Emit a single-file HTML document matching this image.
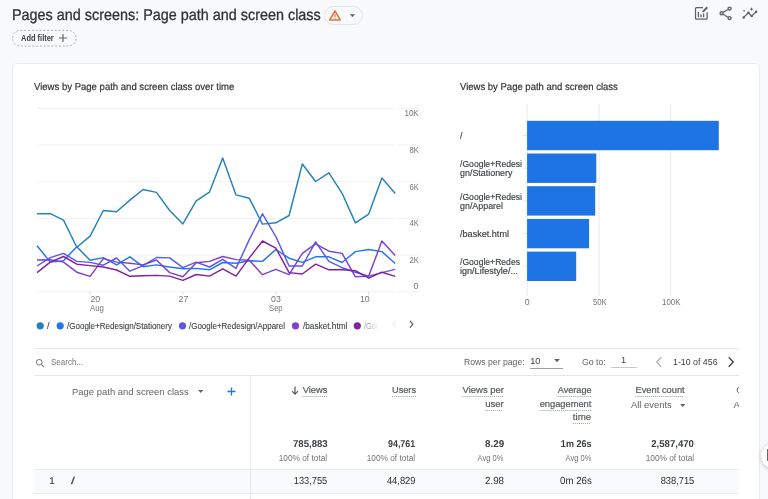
<!DOCTYPE html>
<html lang="en"><head><meta charset="utf-8"><title>Pages and screens: Page path and screen class</title>
<style>
html,body{margin:0;padding:0}
body{width:768px;height:499px;overflow:hidden;background:#f8f9fa;position:relative;font-family:"Liberation Sans",Arial,sans-serif;-webkit-font-smoothing:antialiased}
#root{position:absolute;left:0;top:0;width:768px;height:499px;overflow:hidden;will-change:transform}
.t{position:absolute;white-space:nowrap;display:block}
.u{text-decoration:underline dotted #9aa0a6;text-decoration-thickness:1px;text-underline-offset:2.8px}
</style></head><body><div id="root">
<span class="t" style="left:12.40px;top:6.78px;font-size:15.7px;line-height:18.84px;color:#303236;-webkit-text-stroke:0.3px #303236;text-rendering:geometricPrecision;transform:scaleX(0.9172);transform-origin:left center;">Pages and screens: Page path and screen class</span>
<div style="position:absolute;left:324.2px;top:6.2px;width:39.2px;height:18.4px;border:1px solid #e1e3e6;border-radius:10px;box-sizing:border-box;"></div>
<svg style="position:absolute;left:0;top:0" width="768" height="40" viewBox="0 0 768 40">
<path d="M335 10.9 L340.3 20 H329.7 Z" fill="none" stroke="#dd7440" stroke-width="1.5" stroke-linejoin="round"/>
<path d="M335 14v3.2" stroke="#dd7440" stroke-width="1.2" fill="none"/><circle cx="335" cy="18.6" r="0.65" fill="#dd7440"/>
<path d="M349.8 14.2h5.4l-2.7 2.9z" fill="#5f6368"/>
<g fill="none" stroke="#5f6368" stroke-width="1.25" stroke-linejoin="round">
<path d="M703 7.6H696.400Q695.500 7.600 695.500 8.500V18.300Q695.500 19.200 696.400 19.200H706.200Q707.100 19.200 707.100 18.300V12.200"/>
<path d="M698.400 17.200v-5.200M701 17.200v-2.600M703.600 17.200v-3.800" stroke-width="1.3"/>
<path d="M702.800 11.900L707.300 7.300" stroke-width="2"/>
<circle cx="729.600" cy="8.600" r="1.500" stroke-width="1.4"/><circle cx="721.600" cy="13.300" r="1.500" stroke-width="1.4"/><circle cx="729.600" cy="18.100" r="1.500" stroke-width="1.4"/>
<path d="M723.100 12.400l5-2.900M723.100 14.200l5 3"/>
<path d="M743.600 17.400l4.800-4.700 3.300 3.400 4.500-4.400" stroke-width="1.3"/>
</g>
<g fill="#5f6368"><circle cx="743.600" cy="17.400" r="1.250"/><circle cx="748.400" cy="12.700" r="1.250"/><circle cx="751.700" cy="16.100" r="1.250"/><circle cx="756.200" cy="11.700" r="1.250"/>
<path d="M751.500 7.300l0.600 1.300 1.300 0.600-1.300 0.600-0.600 1.300-0.600-1.300-1.300-0.600 1.300-0.600z"/><circle cx="744.100" cy="10.700" r="0.900" fill="#6d7175"/></g>
</svg>
<svg style="position:absolute;left:0;top:0" width="100" height="60" viewBox="0 0 100 60"><rect x="12.6" y="30.4" width="63.600" height="15.600" rx="7.800" fill="none" stroke="#b0b4b9" stroke-width="1" stroke-dasharray="2.100 1.700"/><path d="M63 34.100v7.800M59.100 38h7.800" stroke="#5f6368" stroke-width="1.150" fill="none"/></svg>
<span class="t" style="left:20.80px;top:32.94px;font-size:8.6px;line-height:10.32px;color:#3c4043;font-weight:700;transform:scaleX(0.8690);transform-origin:left center;">Add filter</span>
<div style="position:absolute;left:12px;top:63.4px;width:748px;height:460px;border:1px solid #eaecef;border-radius:4.5px;box-sizing:border-box;background:#fff"></div>
<span class="t" style="left:34.00px;top:82.18px;font-size:10.2px;line-height:12.24px;color:#303236;-webkit-text-stroke:0.2px #303236;text-rendering:geometricPrecision;transform:scaleX(0.9364);transform-origin:left center;">Views by Page path and screen class over time</span>
<span class="t" style="left:460.00px;top:82.18px;font-size:10.2px;line-height:12.24px;color:#303236;-webkit-text-stroke:0.2px #303236;text-rendering:geometricPrecision;transform:scaleX(0.9330);transform-origin:left center;">Views by Page path and screen class</span>
<svg style="position:absolute;left:0;top:0" width="768" height="499" viewBox="0 0 768 499">
<path d="M37 108.3H395.5M398 108.3H418.5" stroke="#f1f1f1" stroke-width="1"/>
<path d="M37 145.0H395.5M398 145.0H418.5" stroke="#f1f1f1" stroke-width="1"/>
<path d="M37 181.7H395.5M398 181.7H418.5" stroke="#f1f1f1" stroke-width="1"/>
<path d="M37 218.4H395.5M398 218.4H418.5" stroke="#f1f1f1" stroke-width="1"/>
<path d="M37 255.1H395.5M398 255.1H418.5" stroke="#f1f1f1" stroke-width="1"/>
<path d="M37 291.8H395.5M398 291.8H418.5" stroke="#f1f1f1" stroke-width="1"/>
<path d="M90.1 291.8v3.5" stroke="#e0e0e0" stroke-width="1"/>
<path d="M182.9 291.8v3.5" stroke="#e0e0e0" stroke-width="1"/>
<path d="M275.8 291.8v3.5" stroke="#e0e0e0" stroke-width="1"/>
<path d="M368.7 291.8v3.5" stroke="#e0e0e0" stroke-width="1"/>
<polyline points="37.0,245.7 50.3,262.1 63.5,260.7 76.8,246.7 90.1,260.3 103.3,257.6 116.6,264.9 129.9,256.8 143.1,266.7 156.4,264.9 169.7,267.0 182.9,268.7 196.2,268.4 209.5,269.8 222.7,262.5 236.0,263.2 249.3,260.7 262.5,261.4 275.8,249.5 289.1,258.2 302.3,262.4 315.6,256.8 328.9,256.8 342.1,262.5 355.4,251.6 368.7,249.5 381.9,251.6 395.2,263.5" fill="none" stroke="#2277e8" stroke-width="1.45" stroke-linejoin="round"/>
<polyline points="37.0,266.0 50.3,257.6 63.5,253.4 76.8,261.4 90.1,262.4 103.3,265.2 116.6,258.0 129.9,271.2 143.1,265.6 156.4,257.5 169.7,257.9 182.9,267.7 196.2,262.1 209.5,267.0 222.7,259.3 236.0,268.4 249.3,239.6 262.5,213.8 275.8,236.5 289.1,266.0 302.3,266.0 315.6,241.8 328.9,261.4 342.1,267.7 355.4,272.3 368.7,276.1 381.9,272.6 395.2,269.4" fill="none" stroke="#5857ee" stroke-width="1.45" stroke-linejoin="round"/>
<polyline points="37.0,260.0 50.3,259.7 63.5,262.1 76.8,272.2 90.1,276.4 103.3,258.6 116.6,262.1 129.9,263.2 143.1,264.9 156.4,260.0 169.7,272.6 182.9,276.8 196.2,262.8 209.5,261.4 222.7,256.5 236.0,259.6 249.3,260.3 262.5,274.7 275.8,269.4 289.1,274.7 302.3,253.4 315.6,243.9 328.9,251.2 342.1,253.4 355.4,276.8 368.7,276.1 381.9,241.1 395.2,255.4" fill="none" stroke="#7e40d3" stroke-width="1.45" stroke-linejoin="round"/>
<polyline points="37.0,272.6 50.3,262.1 63.5,256.5 76.8,264.2 90.1,265.6 103.3,267.0 116.6,270.0 129.9,276.3 143.1,275.7 156.4,275.4 169.7,276.1 182.9,280.4 196.2,274.5 209.5,276.1 222.7,268.8 236.0,276.1 249.3,257.9 262.5,241.0 275.8,248.1 289.1,272.6 302.3,274.0 315.6,264.2 328.9,269.8 342.1,269.8 355.4,270.6 368.7,278.2 381.9,272.2 395.2,276.4" fill="none" stroke="#82229f" stroke-width="1.45" stroke-linejoin="round"/>
<polyline points="37.0,213.7 50.3,213.7 63.5,220.1 76.8,247.2 90.1,236.1 103.3,210.5 116.6,211.7 129.9,200.1 143.1,189.5 156.4,192.4 169.7,210.5 182.9,223.9 196.2,200.9 209.5,192.1 222.7,158.0 236.0,194.9 249.3,198.3 262.5,224.1 275.8,222.8 289.1,215.5 302.3,164.0 315.6,181.5 328.9,172.8 342.1,193.3 355.4,222.9 368.7,214.1 381.9,178.0 395.2,193.5" fill="none" stroke="#2283bc" stroke-width="1.45" stroke-linejoin="round"/>
<circle cx="40.2" cy="325.8" r="3.6" fill="#2283bc"/>
<circle cx="60.2" cy="325.8" r="3.6" fill="#2277e8"/>
<circle cx="182.5" cy="325.8" r="3.6" fill="#5857ee"/>
<circle cx="295.5" cy="325.8" r="3.6" fill="#7e40d3"/>
<circle cx="357.3" cy="325.8" r="3.6" fill="#82229f"/>
<path d="M395.4 321.2l-2.500 3.100 2.500 3.100" fill="none" stroke="#e2e2e2" stroke-width="1"/>
<path d="M410 320.900l2.800 3.400-2.800 3.400" fill="none" stroke="#5f6368" stroke-width="1.250"/>
<path d="M527.1 104V296" stroke="#e9e9e9" stroke-width="1"/>
<path d="M599.0 104V296" stroke="#e9e9e9" stroke-width="1"/>
<path d="M670.6 104V296" stroke="#e9e9e9" stroke-width="1"/>
<rect x="527.1" y="120.8" width="191.7" height="29.4" fill="#1f74e4"/>
<path d="M523.5 135.5H527" stroke="#e0e0e0" stroke-width="1"/>
<rect x="527.1" y="153.5" width="69.2" height="29.4" fill="#1f74e4"/>
<path d="M523.5 168.2H527" stroke="#e0e0e0" stroke-width="1"/>
<rect x="527.1" y="186.2" width="68.1" height="29.4" fill="#1f74e4"/>
<path d="M523.5 200.9H527" stroke="#e0e0e0" stroke-width="1"/>
<rect x="527.1" y="218.9" width="62.0" height="29.4" fill="#1f74e4"/>
<path d="M523.5 233.6H527" stroke="#e0e0e0" stroke-width="1"/>
<rect x="527.1" y="251.6" width="49.1" height="29.4" fill="#1f74e4"/>
<path d="M523.5 266.3H527" stroke="#e0e0e0" stroke-width="1"/>
</svg>
<span class="t" style="left:402.84px;top:108.12px;font-size:8.8px;line-height:10.56px;color:#757575;transform:scaleX(0.9069);transform-origin:right center;">10K</span>
<span class="t" style="left:407.74px;top:144.82px;font-size:8.8px;line-height:10.56px;color:#757575;transform:scaleX(0.8640);transform-origin:right center;">8K</span>
<span class="t" style="left:407.74px;top:181.52px;font-size:8.8px;line-height:10.56px;color:#757575;transform:scaleX(0.8640);transform-origin:right center;">6K</span>
<span class="t" style="left:407.74px;top:218.22px;font-size:8.8px;line-height:10.56px;color:#757575;transform:scaleX(0.8640);transform-origin:right center;">4K</span>
<span class="t" style="left:407.74px;top:254.92px;font-size:8.8px;line-height:10.56px;color:#757575;transform:scaleX(0.8640);transform-origin:right center;">2K</span>
<span class="t" style="left:413.61px;top:281.32px;font-size:8.8px;line-height:10.56px;color:#757575;">0</span>
<span class="t" style="left:90.40px;top:294.42px;font-size:8.8px;line-height:10.56px;color:#757575;">20</span>
<span class="t" style="left:90.40px;top:302.52px;font-size:8.8px;line-height:10.56px;color:#757575;transform:scaleX(0.8941);transform-origin:left center;">Aug</span>
<span class="t" style="left:178.51px;top:294.42px;font-size:8.8px;line-height:10.56px;color:#757575;">27</span>
<span class="t" style="left:271.11px;top:294.42px;font-size:8.8px;line-height:10.56px;color:#757575;">03</span>
<span class="t" style="left:268.47px;top:302.52px;font-size:8.8px;line-height:10.56px;color:#757575;transform:scaleX(0.8686);transform-origin:center center;">Sep</span>
<span class="t" style="left:359.91px;top:294.42px;font-size:8.8px;line-height:10.56px;color:#757575;">10</span>
<span class="t" style="left:47.00px;top:320.72px;font-size:8.8px;line-height:10.56px;color:#3c4043;-webkit-text-stroke:0.1px #3c4043;">/</span>
<span class="t" style="left:67.00px;top:320.72px;font-size:8.8px;line-height:10.56px;color:#3c4043;-webkit-text-stroke:0.1px #3c4043;transform:scaleX(0.9114);transform-origin:left center;">/Google+Redesign/Stationery</span>
<span class="t" style="left:189.20px;top:320.72px;font-size:8.8px;line-height:10.56px;color:#3c4043;-webkit-text-stroke:0.1px #3c4043;transform:scaleX(0.9064);transform-origin:left center;">/Google+Redesign/Apparel</span>
<span class="t" style="left:302.50px;top:320.72px;font-size:8.8px;line-height:10.56px;color:#3c4043;-webkit-text-stroke:0.1px #3c4043;transform:scaleX(0.9359);transform-origin:left center;">/basket.html</span>
<span class="t" style="left:364.40px;top:320.72px;font-size:8.8px;line-height:10.56px;color:#a2a2a2;transform:scaleX(0.8387);transform-origin:left center;-webkit-mask-image:linear-gradient(90deg,#000 30%,transparent 100%);mask-image:linear-gradient(90deg,#000 30%,transparent 100%);">/Goo</span>
<span class="t" style="left:460.00px;top:130.92px;font-size:8.8px;line-height:10.56px;color:#3c4043;-webkit-text-stroke:0.15px #3c4043;">/</span>
<span class="t" style="left:460.00px;top:159.32px;font-size:8.8px;line-height:10.56px;color:#3c4043;-webkit-text-stroke:0.15px #3c4043;transform:scaleX(0.9786);transform-origin:left center;">/Google+Redesi</span>
<span class="t" style="left:460.00px;top:168.32px;font-size:8.8px;line-height:10.56px;color:#3c4043;-webkit-text-stroke:0.15px #3c4043;transform:scaleX(1.0124);transform-origin:left center;">gn/Stationery</span>
<span class="t" style="left:460.00px;top:191.72px;font-size:8.8px;line-height:10.56px;color:#3c4043;-webkit-text-stroke:0.15px #3c4043;transform:scaleX(0.9786);transform-origin:left center;">/Google+Redesi</span>
<span class="t" style="left:460.00px;top:200.72px;font-size:8.8px;line-height:10.56px;color:#3c4043;-webkit-text-stroke:0.15px #3c4043;transform:scaleX(1.0102);transform-origin:left center;">gn/Apparel</span>
<span class="t" style="left:460.00px;top:228.92px;font-size:8.8px;line-height:10.56px;color:#3c4043;-webkit-text-stroke:0.15px #3c4043;transform:scaleX(1.0328);transform-origin:left center;">/basket.html</span>
<span class="t" style="left:460.00px;top:256.92px;font-size:8.8px;line-height:10.56px;color:#3c4043;-webkit-text-stroke:0.15px #3c4043;transform:scaleX(0.9772);transform-origin:left center;">/Google+Redes</span>
<span class="t" style="left:460.00px;top:266.22px;font-size:8.8px;line-height:10.56px;color:#3c4043;-webkit-text-stroke:0.15px #3c4043;transform:scaleX(1.0311);transform-origin:left center;">ign/Lifestyle/...</span>
<span class="t" style="left:524.65px;top:297.02px;font-size:8.8px;line-height:10.56px;color:#757575;">0</span>
<span class="t" style="left:591.57px;top:297.02px;font-size:8.8px;line-height:10.56px;color:#757575;transform:scaleX(0.8813);transform-origin:center center;">50K</span>
<span class="t" style="left:660.72px;top:297.02px;font-size:8.8px;line-height:10.56px;color:#757575;transform:scaleX(0.8953);transform-origin:center center;">100K</span>
<div style="position:absolute;left:34px;top:347.5px;width:705px;height:1px;background:#e6e6e6"></div>
<div style="position:absolute;left:34px;top:374.6px;width:705px;height:1px;background:#e6e6e6"></div>
<div style="position:absolute;left:250px;top:375px;width:1px;height:130px;background:#ededed"></div>
<div style="position:absolute;left:34px;top:469px;width:705px;height:24.5px;background:#f9fafb;border-top:1px solid #ebebeb;border-bottom:1px solid #ebebeb;box-sizing:border-box"></div>
<div style="position:absolute;left:250px;top:469px;width:1px;height:30px;background:#e6e6e6"></div>
<svg style="position:absolute;left:34.5px;top:357.5px" width="10" height="10" viewBox="0 0 10 10" fill="none" stroke="#80868b" stroke-width="1.05"><circle cx="4.200" cy="4.200" r="2.800"/><path d="M6.300 6.300L9.200 9.200"/></svg>
<span class="t" style="left:51.00px;top:356.92px;font-size:8.8px;line-height:10.56px;color:#757575;transform:scaleX(0.9086);transform-origin:left center;">Search...</span>
<span class="t" style="left:463.70px;top:356.58px;font-size:9.2px;line-height:11.04px;color:#5f6368;transform:scaleX(0.9420);transform-origin:left center;">Rows per page:</span>
<span class="t" style="left:530.20px;top:355.98px;font-size:9.2px;line-height:11.04px;color:#3c4043;">10</span>
<svg style="position:absolute;left:554px;top:359.200px" width="6" height="3.300" viewBox="0 0 7 4"><path d="M0 0h7L3.5 4z" fill="#5f6368"/></svg>
<div style="position:absolute;left:530px;top:367.5px;width:33px;height:1px;background:#9aa0a6"></div>
<span class="t" style="left:581.80px;top:356.88px;font-size:9.2px;line-height:11.04px;color:#5f6368;transform:scaleX(0.9498);transform-origin:left center;">Go to:</span>
<span class="t" style="left:621.04px;top:354.98px;font-size:9.2px;line-height:11.04px;color:#3c4043;">1</span>
<div style="position:absolute;left:611px;top:367px;width:26px;height:1px;background:#c6c9cd"></div>
<svg style="position:absolute;left:654px;top:356px" width="10" height="12" viewBox="0 0 10 12"><path d="M7.3 1.2L2.7 6l4.600 4.800" fill="none" stroke="#a6a6a6" stroke-width="1.1"/></svg>
<span class="t" style="left:672.50px;top:356.78px;font-size:9.2px;line-height:11.04px;color:#3c4043;transform:scaleX(0.9581);transform-origin:left center;">1-10 of 456</span>
<svg style="position:absolute;left:726px;top:356px" width="10" height="12" viewBox="0 0 10 12"><path d="M2.700 1.200L7.300 6l-4.600 4.800" fill="none" stroke="#3c4043" stroke-width="1.3"/></svg>
<span class="t" style="left:71.70px;top:385.52px;font-size:9.8px;line-height:11.76px;color:#5f6368;transform:scaleX(0.9657);transform-origin:left center;">Page path and screen class</span>
<svg style="position:absolute;left:197.6px;top:390px" width="5.4" height="2.9" viewBox="0 0 7 4"><path d="M0 0h7L3.5 4z" fill="#5f6368"/></svg>
<svg style="position:absolute;left:226.5px;top:387px" width="9" height="9" viewBox="0 0 9 9"><path d="M4.500 0.500v8M0.500 4.500h8" stroke="#1a73e8" stroke-width="1.3" fill="none"/></svg>
<svg style="position:absolute;left:290.5px;top:385.5px" width="8" height="9" viewBox="0 0 8 9"><path d="M4 0.500v7.500M1.100 5.200l2.900 2.900L6.900 5.200" fill="none" stroke="#53575b" stroke-width="1.2"/></svg>
<span class="t u" style="left:302.17px;top:384.04px;font-size:9.6px;line-height:11.52px;color:#53575b;-webkit-text-stroke:0.2px #53575b;transform:scaleX(0.9750);transform-origin:right center;">Views</span>
<span class="t u" style="left:390.53px;top:384.04px;font-size:9.6px;line-height:11.52px;color:#53575b;-webkit-text-stroke:0.2px #53575b;transform:scaleX(0.9614);transform-origin:right center;">Users</span>
<span class="t u" style="left:461.82px;top:384.04px;font-size:9.6px;line-height:11.52px;color:#53575b;-webkit-text-stroke:0.2px #53575b;transform:scaleX(0.9863);transform-origin:right center;">Views per</span>
<span class="t u" style="left:485.12px;top:397.84px;font-size:9.6px;line-height:11.52px;color:#53575b;-webkit-text-stroke:0.2px #53575b;transform:scaleX(0.9906);transform-origin:right center;">user</span>
<span class="t u" style="left:555.92px;top:384.04px;font-size:9.6px;line-height:11.52px;color:#53575b;-webkit-text-stroke:0.2px #53575b;transform:scaleX(0.9499);transform-origin:right center;">Average</span>
<span class="t u" style="left:538.12px;top:397.64px;font-size:9.6px;line-height:11.52px;color:#53575b;-webkit-text-stroke:0.2px #53575b;transform:scaleX(0.9686);transform-origin:right center;">engagement</span>
<span class="t u" style="left:573.36px;top:411.24px;font-size:9.6px;line-height:11.52px;color:#53575b;-webkit-text-stroke:0.2px #53575b;transform:scaleX(1.0090);transform-origin:right center;">time</span>
<span class="t u" style="left:633.60px;top:384.04px;font-size:9.6px;line-height:11.52px;color:#53575b;-webkit-text-stroke:0.2px #53575b;transform:scaleX(0.9704);transform-origin:right center;">Event count</span>
<span class="t" style="left:630.60px;top:399.14px;font-size:9.6px;line-height:11.52px;color:#5f6368;transform:scaleX(0.9803);transform-origin:left center;">All events</span>
<svg style="position:absolute;left:680.2px;top:403.6px" width="5.5" height="3" viewBox="0 0 7 4"><path d="M0 0h7L3.500 4z" fill="#5f6368"/></svg>
<div style="position:absolute;left:733.4px;top:380px;width:5.6px;height:40px;overflow:hidden"><span class="t" style="left:2.800px;top:4px;font-size:9.6px;line-height:11.5px;color:#5f6368">Conversions</span><span class="t" style="left:0;top:19.2px;font-size:9.6px;line-height:11.5px;color:#5f6368">All events</span></div>
<span class="t" style="left:291.81px;top:438.66px;font-size:9.9px;line-height:11.88px;color:#3c4043;font-weight:700;text-rendering:geometricPrecision;transform:scaleX(0.9724);transform-origin:right center;">785,883</span>
<span class="t" style="left:385.32px;top:438.66px;font-size:9.9px;line-height:11.88px;color:#3c4043;font-weight:700;text-rendering:geometricPrecision;transform:scaleX(0.9016);transform-origin:right center;">94,761</span>
<span class="t" style="left:484.53px;top:438.66px;font-size:9.9px;line-height:11.88px;color:#3c4043;font-weight:700;text-rendering:geometricPrecision;transform:scaleX(0.9965);transform-origin:right center;">8.29</span>
<span class="t" style="left:557.92px;top:438.66px;font-size:9.9px;line-height:11.88px;color:#3c4043;font-weight:700;text-rendering:geometricPrecision;transform:scaleX(0.9143);transform-origin:right center;">1m 26s</span>
<span class="t" style="left:649.76px;top:438.66px;font-size:9.9px;line-height:11.88px;color:#3c4043;font-weight:700;text-rendering:geometricPrecision;transform:scaleX(0.9718);transform-origin:right center;">2,587,470</span>
<span class="t" style="left:277.40px;top:452.74px;font-size:8.6px;line-height:10.32px;color:#757575;transform:scaleX(0.9661);transform-origin:right center;">100% of total</span>
<span class="t" style="left:365.40px;top:452.74px;font-size:8.6px;line-height:10.32px;color:#757575;transform:scaleX(0.9661);transform-origin:right center;">100% of total</span>
<span class="t" style="left:474.32px;top:452.74px;font-size:8.6px;line-height:10.32px;color:#757575;transform:scaleX(0.8819);transform-origin:right center;">Avg 0%</span>
<span class="t" style="left:562.02px;top:452.74px;font-size:8.6px;line-height:10.32px;color:#757575;transform:scaleX(0.8819);transform-origin:right center;">Avg 0%</span>
<span class="t" style="left:643.60px;top:452.74px;font-size:8.6px;line-height:10.32px;color:#757575;transform:scaleX(0.9661);transform-origin:right center;">100% of total</span>
<span class="t" style="left:290.37px;top:476.12px;font-size:10.3px;line-height:12.36px;color:#2c2e31;text-rendering:geometricPrecision;transform:scaleX(0.8998);transform-origin:right center;">133,755</span>
<span class="t" style="left:384.10px;top:476.12px;font-size:10.3px;line-height:12.36px;color:#2c2e31;text-rendering:geometricPrecision;transform:scaleX(0.9078);transform-origin:right center;">44,829</span>
<span class="t" style="left:483.75px;top:476.12px;font-size:10.3px;line-height:12.36px;color:#2c2e31;text-rendering:geometricPrecision;transform:scaleX(0.9478);transform-origin:right center;">2.98</span>
<span class="t" style="left:557.72px;top:476.12px;font-size:10.3px;line-height:12.36px;color:#2c2e31;text-rendering:geometricPrecision;transform:scaleX(0.9385);transform-origin:right center;">0m 26s</span>
<span class="t" style="left:656.57px;top:476.12px;font-size:10.3px;line-height:12.36px;color:#2c2e31;text-rendering:geometricPrecision;transform:scaleX(0.9024);transform-origin:right center;">838,715</span>
<span class="t" style="left:49.15px;top:476.06px;font-size:9.9px;line-height:11.88px;color:#3c4043;-webkit-text-stroke:0.15px #3c4043;text-rendering:geometricPrecision;">1</span>
<span class="t" style="left:70.80px;top:476.06px;font-size:9.9px;line-height:11.88px;color:#3c4043;-webkit-text-stroke:0.2px #3c4043;text-rendering:geometricPrecision;transform:scaleX(1.3816);transform-origin:left center;">/</span>
<div style="position:absolute;left:760.8px;top:443.6px;width:24px;height:24px;border-radius:12px;background:#fff;box-shadow:0 1px 4px rgba(60,64,67,.3)"></div>
<div style="position:absolute;left:766.7px;top:448.6px;width:1.5px;height:12.4px;background:#6a6a6a"></div>
</div></body></html>
